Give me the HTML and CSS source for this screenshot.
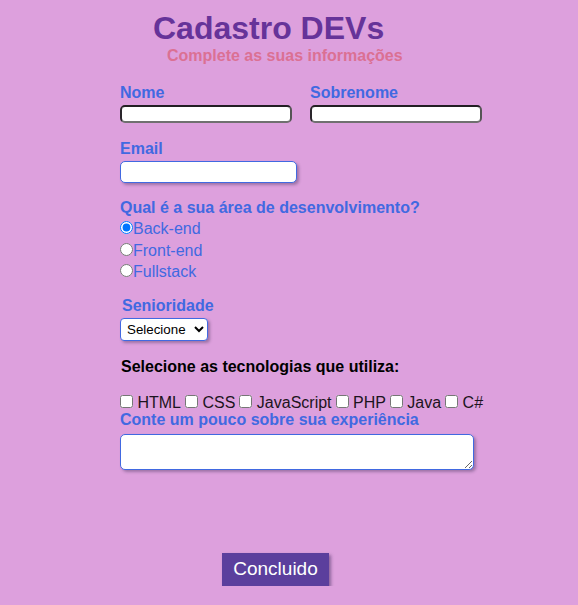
FILE: index.html
```html
<!DOCTYPE html>
<html lang="pt-BR">
  <head>
    <meta charset="UTF-8" />
    <meta name="viewport" content="width=device-width, initial-scale=1.0" />
    <title>Cadastro DEVs</title>
    <link rel="stylesheet" href="styles.css">
  </head>
  <body>
    <header class="header">
      <h1>Cadastro DEVs</h1>
      <p class="subtitle">Complete as suas informações</p>
    </header>

    <form class="form">
      <!-- Nome e sobrenome lado a lado -->
      <div class="name-row">
        <div class="field">
          <label for="nome">Nome</label>
          <input type="text" id="nome" class="input-plain" />
        </div>
        <div class="field">
          <label for="sobrenome">Sobrenome</label>
          <input type="text" id="sobrenome" class="input-plain" />
        </div>
      </div>

      <div class="field email-field">
        <label for="email">Email</label>
        <input type="email" id="email" class="input-blue" />
      </div>

      <div class="area">
        <p class="label">Qual é a sua área de desenvolvimento?</p>
        <label class="radio-row"><input type="radio" name="area" checked />Back-end</label>
        <label class="radio-row"><input type="radio" name="area" />Front-end</label>
        <label class="radio-row"><input type="radio" name="area" />Fullstack</label>
      </div>

      <div class="field seniority">
        <label for="senioridade">Senioridade</label>
        <select id="senioridade" class="select">
          <option>Selecione</option>
          <option>Júnior</option>
          <option>Pleno</option>
          <option>Sênior</option>
        </select>
      </div>

      <p class="tech-title">Selecione as tecnologias que utiliza:</p>
      <!-- sem espaço entre um item e o próximo checkbox -->
      <div class="tech-list"><input type="checkbox" id="html" /> <label for="html">HTML</label><input type="checkbox" id="css" /> <label for="css">CSS</label><input type="checkbox" id="js" /> <label for="js">JavaScript</label><input type="checkbox" id="php" /> <label for="php">PHP</label><input type="checkbox" id="java" /> <label for="java">Java</label><input type="checkbox" id="cs" /> <label for="cs">C#</label></div>

      <div class="field experience">
        <label for="experiencia">Conte um pouco sobre sua experiência</label>
        <textarea id="experiencia" class="textarea"></textarea>
      </div>

      <button type="submit" class="btn">Concluido</button>
    </form>
  </body>
</html>
```

FILE: styles.css
```css
body {
  margin: 0;
  padding: 0;
  background-color: plum;
  font-family: "Liberation Sans", Arial, sans-serif;
}

.header {
  padding-top: 10px;
}

.header h1 {
  margin: 0;
  padding-left: 153px;
  font-size: 32px;
  color: #663399;
}

.subtitle {
  margin: 0;
  padding-left: 167px;
  font-size: 16px;
  font-weight: bold;
  color: palevioletred;
}

.form {
  padding-left: 120px;
  padding-top: 19px;
}

.field label,
.label {
  display: block;
  margin: 0 0 3px;
  font-size: 16px;
  font-weight: bold;
  color: royalblue;
}

.name-row {
  display: flex;
  gap: 18px;
}

.input-plain {
  display: block;
  box-sizing: border-box;
  width: 172px;
  height: 18px;
  margin: 0;
  border: 2px solid;
  border-color: #231f24 #555 #707070 #2a262b;
  border-radius: 5px;
  background: white;
}

.email-field {
  margin-top: 17px;
}

.input-blue {
  display: block;
  box-sizing: border-box;
  width: 177px;
  height: 22px;
  margin: 0;
  border: 1px solid royalblue;
  border-radius: 5px;
  background: white;
  box-shadow: 2px 2px 3px rgba(80, 60, 100, 0.45);
}

.area {
  margin-top: 16px;
}

.area .label {
  margin-bottom: 1px;
}

.radio-row {
  display: block;
  line-height: 21.5px;
  font-size: 16px;
  color: royalblue;
}

.radio-row input {
  margin: 3px 0 0 0;
}

.seniority {
  margin-top: 14px;
}

.seniority label {
  margin-left: 2px;
}

.select {
  display: block;
  box-sizing: border-box;
  width: 88px;
  height: 23px;
  margin: 0;
  padding: 0 2px;
  font-family: "Liberation Sans", Arial, sans-serif;
  font-size: 13.33px;
  color: black;
  border: 1px solid royalblue;
  border-radius: 4px;
  background: white;
  box-shadow: 2px 2px 3px rgba(80, 60, 100, 0.45);
}

.tech-title {
  margin: 17px 0 0 1px;
  font-size: 16px;
  font-weight: bold;
  color: black;
}

.tech-list {
  margin-top: 18px;
  line-height: 17px;
  font-size: 16px;
  color: #1c1420;
}

.tech-list input {
  margin: 0 0 0 4px;
}

.tech-list input:first-child {
  margin-left: 0;
}

.experience label {
  margin-bottom: 5px;
}

.textarea {
  display: block;
  box-sizing: border-box;
  width: 354px;
  height: 36px;
  margin: 0;
  border: 1px solid royalblue;
  border-radius: 5px;
  background: white;
  box-shadow: 2px 2px 3px rgba(80, 60, 100, 0.45);
  resize: vertical;
}

.btn {
  display: block;
  width: 107px;
  height: 33px;
  margin: 83px 0 0 102px;
  padding: 0;
  font-family: "Liberation Sans", Arial, sans-serif;
  font-size: 19px;
  color: white;
  background-color: #5b3f9d;
  border: none;
  box-shadow: 2px 2px 3px rgba(60, 40, 90, 0.5);
  cursor: pointer;
}
```
